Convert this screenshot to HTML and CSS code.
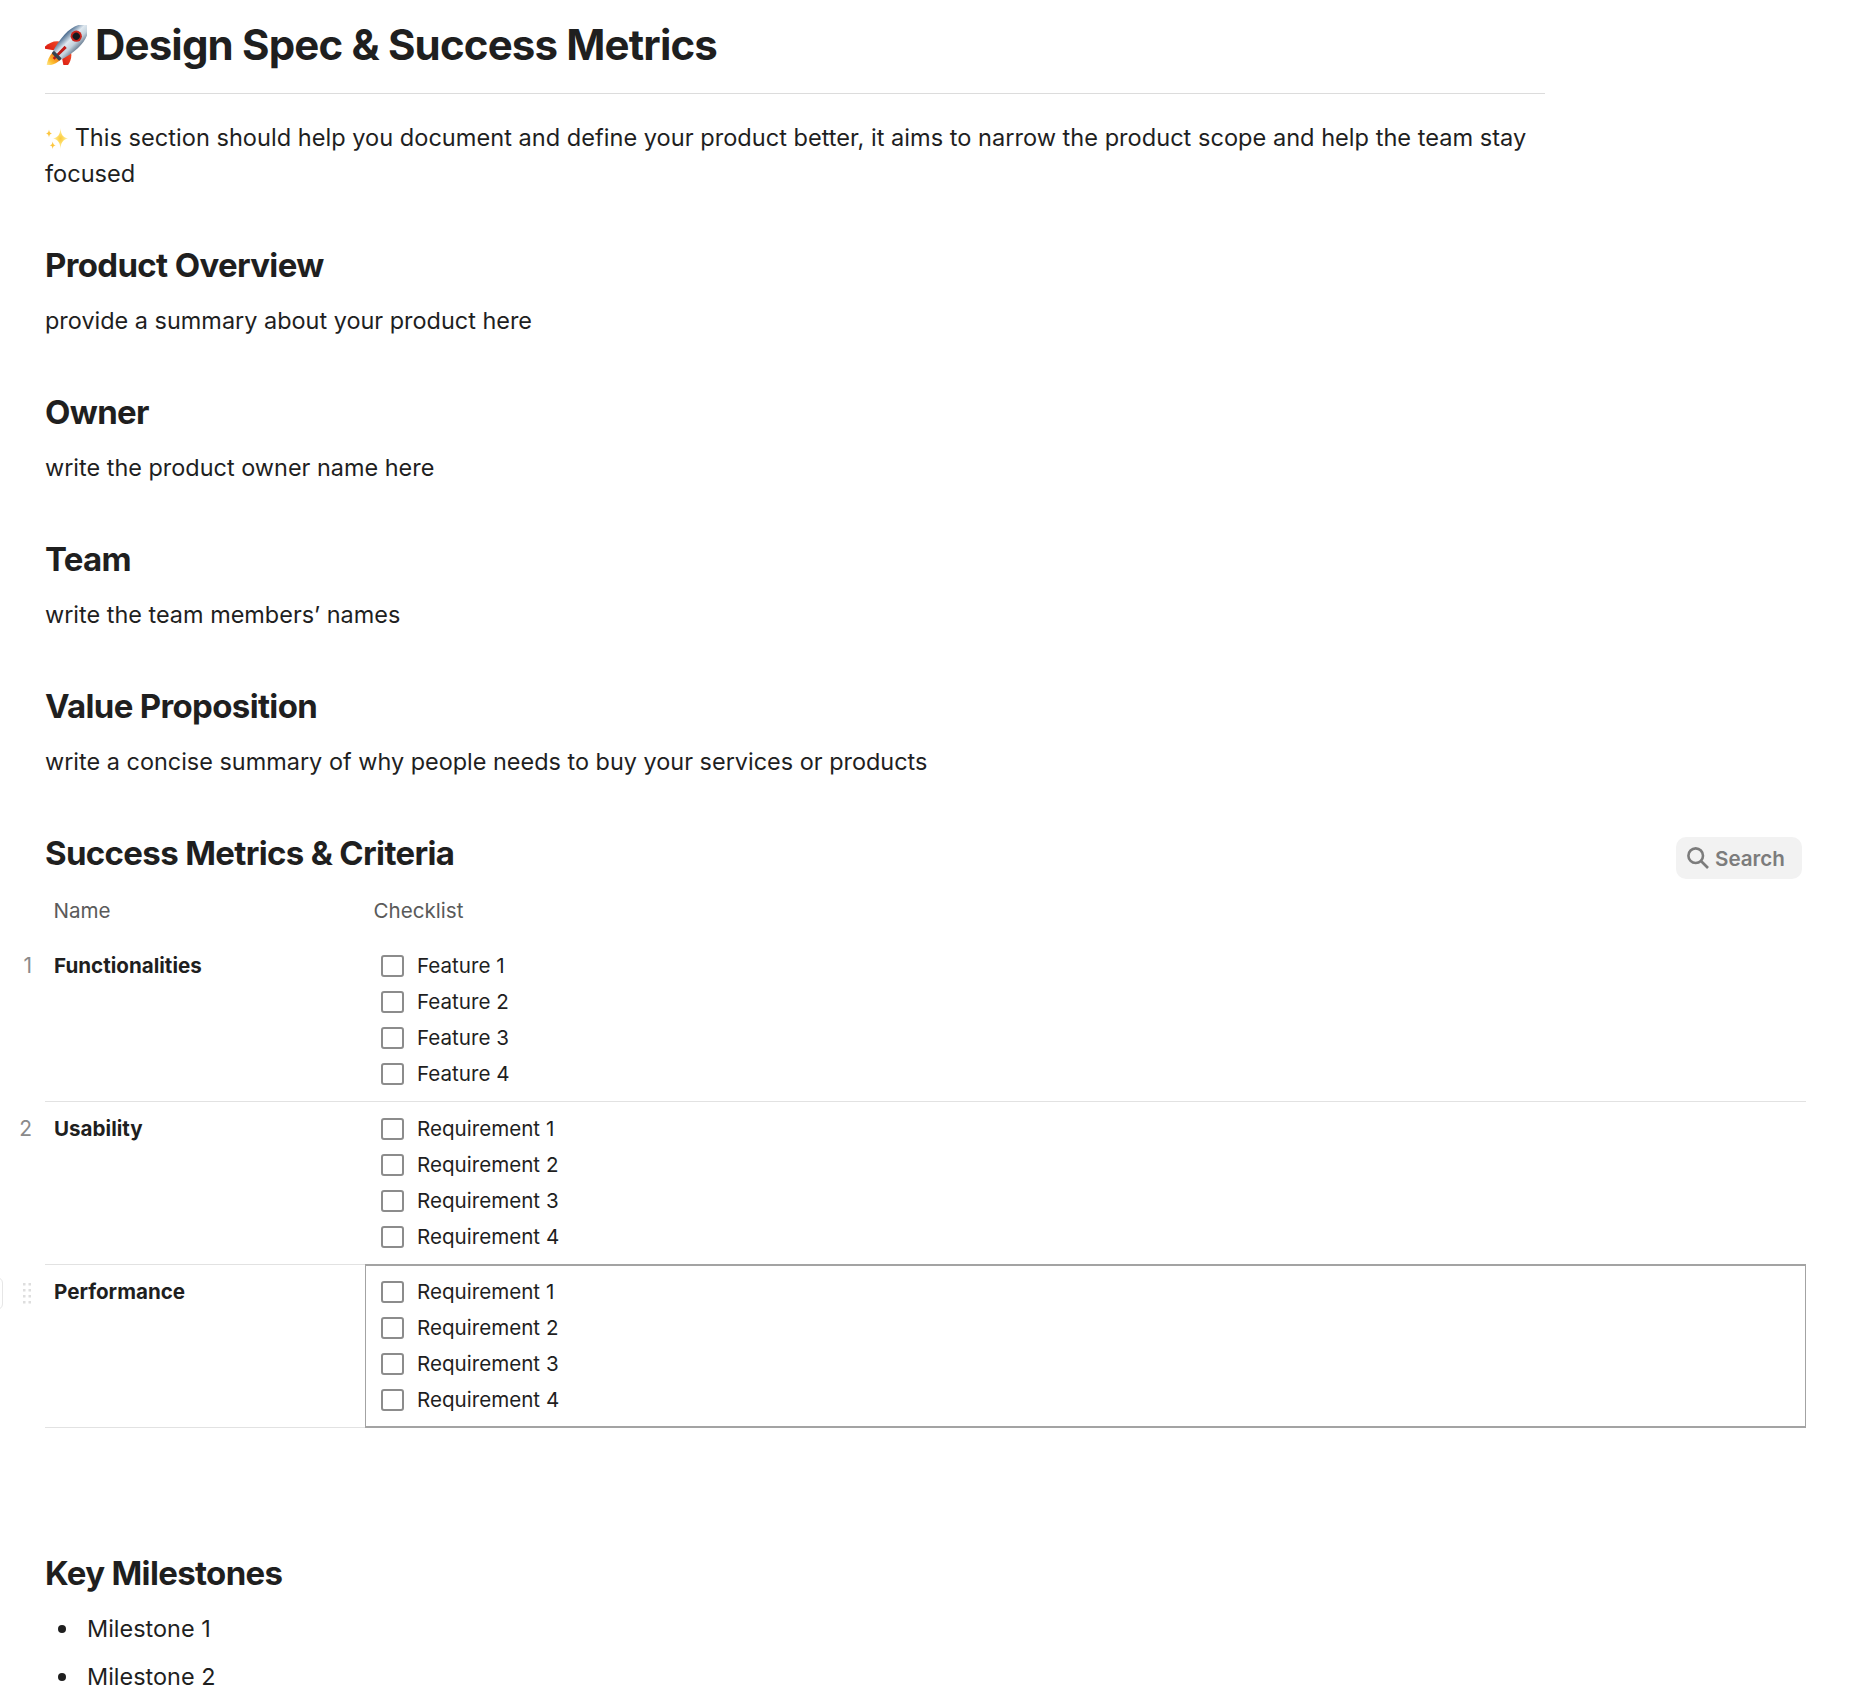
FILE: index.html
```html
<!DOCTYPE html>
<html lang="en">
<head>
<meta charset="utf-8">
<title>Design Spec &amp; Success Metrics</title>
<link rel="stylesheet" href="styles.css">
</head>
<body>
<svg class="defs" width="0" height="0" aria-hidden="true">
  <defs>
    <linearGradient id="hull" x1="0" y1="0" x2="1" y2="0">
      <stop offset="0" stop-color="#47688c"/><stop offset=".4" stop-color="#dfe8ef"/><stop offset=".7" stop-color="#c4d2dd"/><stop offset="1" stop-color="#6f8296"/>
    </linearGradient>
    <linearGradient id="fin" x1="0" y1="0" x2="0" y2="1">
      <stop offset="0" stop-color="#f5502a"/><stop offset="1" stop-color="#d8170f"/>
    </linearGradient>
    <linearGradient id="flame" x1="0" y1="0" x2="0" y2="1">
      <stop offset="0" stop-color="#f07a1a"/><stop offset=".55" stop-color="#fdc02f"/><stop offset="1" stop-color="#fff0a8"/>
    </linearGradient>
    <radialGradient id="spark" cx=".5" cy=".5" r=".5">
      <stop offset="0" stop-color="#fdc93c"/><stop offset=".5" stop-color="#fde06f"/><stop offset="1" stop-color="#fff0b4"/>
    </radialGradient>
  </defs>
</svg>
<main class="page">
  <header class="doc-title">
    <svg class="rocket" viewBox="0 0 42 40" aria-hidden="true">
      <g transform="translate(23.500 19) rotate(45)">
        <path d="M-5.500 17 C-5 23 -2.500 28 0 31 C2.500 28 5 23 5.500 17 Z" fill="url(#flame)"/>
        <path d="M-6 3 C-13 7 -15 13 -15 21 L-6 15 Z" fill="url(#fin)"/>
        <path d="M6 3 C13 7 15 13 15 21 L6 15 Z" fill="url(#fin)"/>
        <path d="M0 -28 C7 -23 10 -14 9.500 -4 C9.200 4 7.500 11 5.500 17 L-5.500 17 C-7.500 11 -9.200 4 -9.500 -4 C-10 -14 -7 -23 0 -28 Z" fill="url(#hull)"/>
        <path d="M-1.500 4 L1.500 4 L1.300 21 L-1.300 21 Z" fill="#c01a14"/>
        <rect x="-5.500" y="15" width="11" height="3.500" rx="1" fill="#36424f"/>
        <circle cx="0" cy="-11" r="5.600" fill="#c9241c"/>
        <circle cx="0" cy="-11" r="3.600" fill="#15181d"/>
      </g>
    </svg>
    <h1 class="doc-heading">Design Spec &amp; Success Metrics</h1>
  </header>

  <p class="intro"><svg class="sparkles" viewBox="0 0 23 21" aria-hidden="true">
      <path d="M15.500 0 C16 6.500 17.500 9 23 10.500 C17.500 12 16 14.500 15.500 21 C15 14.500 13.500 12 8 10.500 C13.500 9 15 6.500 15.500 0 Z" fill="url(#spark)"/>
      <path d="M4 1.500 C4.300 4 5 5 7 5.500 C5 6 4.300 7 4 9.500 C3.700 7 3 6 1 5.500 C3 5 3.700 4 4 1.500 Z" fill="#fcc63f"/>
      <path d="M7.700 13.500 C8 16 8.800 17 10.700 17.300 C8.800 17.700 8 18.500 7.700 21 C7.400 18.500 6.600 17.700 4.700 17.300 C6.600 17 7.400 16 7.700 13.500 Z" fill="#fcc63f"/>
    </svg> This section should help you document and define your product better, it aims to narrow the product scope and help the team stay focused</p>

  <section class="block">
    <h2 class="block-title">Product Overview</h2>
    <p class="block-text">provide a summary about your product here</p>
  </section>
  <section class="block">
    <h2 class="block-title">Owner</h2>
    <p class="block-text">write the product owner name here</p>
  </section>
  <section class="block">
    <h2 class="block-title">Team</h2>
    <p class="block-text">write the team members’ names</p>
  </section>
  <section class="block">
    <h2 class="block-title">Value Proposition</h2>
    <p class="block-text">write a concise summary of why people needs to buy your services or products</p>
  </section>

  <section class="metrics">
    <div class="metrics-head">
      <h2 class="block-title">Success Metrics &amp; Criteria</h2>
      <div class="search">
        <svg class="search-icon" viewBox="0 0 22 22" aria-hidden="true"><circle cx="8.700" cy="8.700" r="7.300"/><path d="M14 14 L21 21"/></svg>
        <span>Search</span>
      </div>
    </div>
    <div class="table">
      <div class="th gutter"></div>
      <div class="th">Name</div>
      <div class="th th-check">Checklist</div>

      <div class="gutter row-num">1</div>
      <div class="name-cell">Functionalities</div>
      <ul class="check-cell">
        <li class="check"><span class="box"></span>Feature 1</li>
        <li class="check"><span class="box"></span>Feature 2</li>
        <li class="check"><span class="box"></span>Feature 3</li>
        <li class="check"><span class="box"></span>Feature 4</li>
      </ul>

      <div class="gutter row-num">2</div>
      <div class="name-cell">Usability</div>
      <ul class="check-cell">
        <li class="check"><span class="box"></span>Requirement 1</li>
        <li class="check"><span class="box"></span>Requirement 2</li>
        <li class="check"><span class="box"></span>Requirement 3</li>
        <li class="check"><span class="box"></span>Requirement 4</li>
      </ul>

      <div class="gutter row-tools">
        <span class="row-tab"></span>
        <svg class="grip" viewBox="0 0 8 21" aria-hidden="true">
          <rect x="0" y="0" width="2.500" height="2.500"/><rect x="5.500" y="0" width="2.500" height="2.500"/>
          <rect x="0" y="6" width="2.500" height="2.500"/><rect x="5.500" y="6" width="2.500" height="2.500"/>
          <rect x="0" y="12" width="2.500" height="2.500"/><rect x="5.500" y="12" width="2.500" height="2.500"/>
          <rect x="0" y="18" width="2.500" height="2.500"/><rect x="5.500" y="18" width="2.500" height="2.500"/>
        </svg>
      </div>
      <div class="name-cell">Performance</div>
      <ul class="check-cell is-selected">
        <li class="check"><span class="box"></span>Requirement 1</li>
        <li class="check"><span class="box"></span>Requirement 2</li>
        <li class="check"><span class="box"></span>Requirement 3</li>
        <li class="check"><span class="box"></span>Requirement 4</li>
      </ul>
    </div>
  </section>

  <section class="milestones">
    <h2 class="block-title">Key Milestones</h2>
    <ul class="bullets">
      <li>Milestone 1</li>
      <li>Milestone 2</li>
    </ul>
  </section>
</main>
</body>
</html>
```
FILE: styles.css
```css
* { box-sizing: border-box; }
html, body { margin: 0; padding: 0; background: #fff; }
body {
  height: 1708px;
  overflow: hidden;
  font-family: Inter, "Liberation Sans", sans-serif;
  color: #1f1f1f;
}
.defs { position: absolute; }
.page { padding-left: 45px; }

.doc-title {
  width: 1500px;
  height: 94px;
  padding-top: 18px;
  display: flex;
  align-items: flex-start;
  gap: 8px;
  border-bottom: 1px solid #dcdcdc;
}
.rocket { width: 42px; height: 40px; margin-top: 7px; flex: none; }
.doc-heading {
  margin: 0;
  font-size: 42px;
  line-height: 54px;
  font-weight: 700;
  letter-spacing: -0.02em;
}
.intro {
  width: 1500px;
  margin: 26px 0 0;
  font-size: 23.6px;
  line-height: 36px;
  font-weight: 400;
}
.sparkles { width: 23px; height: 21px; vertical-align: -3px; }

.block { margin-top: 51px; }
.block-title {
  margin: 0;
  font-size: 33px;
  line-height: 44px;
  font-weight: 700;
  letter-spacing: -0.02em;
}
.block-text {
  margin: 16px 0 0;
  font-size: 23.45px;
  line-height: 36px;
}

.metrics { margin-top: 51px; }
.metrics-head {
  width: 1757px;
  display: flex;
  justify-content: space-between;
  align-items: flex-start;
}
.search {
  margin-top: 6px;
  width: 126px;
  height: 42px;
  padding-left: 11px;
  display: flex;
  align-items: center;
  gap: 6px;
  background: #f2f2f2;
  border-radius: 10px;
  color: #7c7c7c;
  font-size: 20.6px;
  font-weight: 600;
}
.search-icon { width: 22px; height: 22px; fill: none; stroke: #7c7c7c; stroke-width: 2.600; }

.table {
  margin-left: -45px;
  margin-top: 4px;
  display: grid;
  grid-template-columns: 45px 320px 1441px;
  width: 1806px;
  font-size: 20.6px;
}
.th {
  padding: 10px 8px 0 8.5px;
  line-height: 36px;
  color: #5a5a5a;
  height: 56px;
}
.th.gutter { padding: 0; }
.gutter { position: relative; }
.row-num {
  padding: 9px 13px 0 0;
  text-align: right;
  line-height: 36px;
  color: #8a8a8a;
  font-size: 21px;
}
.name-cell {
  padding: 9px 8px 0 9px;
  line-height: 36px;
  font-weight: 700;
  border-bottom: 1px solid #e2e2e2;
}
.check-cell {
  margin: 0;
  padding: 9px 16px 8px;
  list-style: none;
  height: 163px;
  border-bottom: 1px solid #e2e2e2;
}
.check { height: 36px; display: flex; align-items: center; gap: 13px; line-height: 36px; }
.box {
  width: 23px;
  height: 22px;
  flex: none;
  border: 2px solid #8c8c8c;
  border-radius: 3px;
  background: #fff;
}
.is-selected {
  height: 164px;
  margin-top: -1px;
  padding: 8px 15px 8px;
  border: 2px solid #a3a3a3;
  border-width: 2px 1.500px 2px 1.500px;
}
.row-tab {
  position: absolute;
  left: -12px;
  top: 12px;
  width: 15px;
  height: 33px;
  border: 1px solid #e6e6e6;
  border-radius: 6px;
}
.grip {
  position: absolute;
  left: 23px;
  top: 18px;
  width: 8px;
  height: 21px;
  fill: #dedede;
}

.milestones { margin-top: 123px; }
.bullets {
  margin: 16px 0 0;
  padding: 0;
  list-style: none;
  font-size: 23.45px;
  line-height: 36px;
}
.bullets li {
  margin-bottom: 12px;
  display: flex;
  align-items: center;
  gap: 21px;
  padding-left: 13px;
}
.bullets li::before {
  content: "";
  width: 8px;
  height: 8px;
  border-radius: 50%;
  background: #1f1f1f;
  flex: none;
}
```
